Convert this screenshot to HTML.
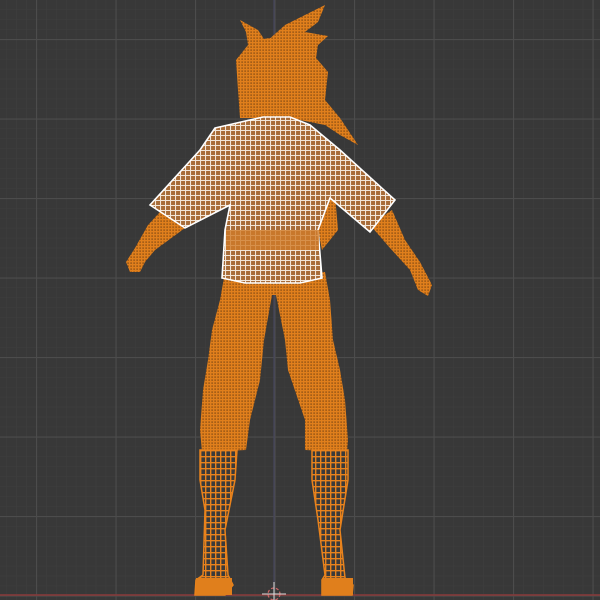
<!DOCTYPE html>
<html><head><style>
html,body{margin:0;padding:0;background:#383838;width:600px;height:600px;overflow:hidden}
</style></head><body>
<svg width="600" height="600" viewBox="0 0 600 600" xmlns="http://www.w3.org/2000/svg">
<defs>
<pattern id="minor" x="-3.7" y="-0.75" width="9.94" height="9.94" patternUnits="userSpaceOnUse">
<path d="M0 0H9.94M0 0V9.94" stroke="#3e3e3e" stroke-width="1"/>
</pattern>
<pattern id="major" x="36" y="39" width="79.5" height="79.5" patternUnits="userSpaceOnUse">
<path d="M0 0.5H79.5M0.5 0V79.5" stroke="#4c4c4c" stroke-width="1.2"/>
</pattern>
<pattern id="dense" width="3" height="3" patternUnits="userSpaceOnUse">
<rect width="3" height="3" fill="#e07f1c"/><rect x="1.5" y="1.5" width="1.2" height="1.2" fill="#6a3c12"/>
</pattern>
<pattern id="sparse" width="5" height="6" patternUnits="userSpaceOnUse">
<rect width="5" height="6" fill="#3a3a3a"/><path d="M0 0.7H5M0.7 0V6" stroke="#e8821c" stroke-width="1.4"/>
</pattern>
<pattern id="shirt" width="5" height="5" patternUnits="userSpaceOnUse">
<rect width="5" height="5" fill="#a86c38"/><path d="M0 0.5H5M0.5 0V5" stroke="#f2e6d8" stroke-width="1.1"/>
</pattern>
</defs>
<rect width="600" height="600" fill="#383838"/>
<rect width="600" height="600" fill="url(#minor)"/>
<rect width="600" height="600" fill="url(#major)"/>
<line x1="274" y1="0" x2="274" y2="600" stroke="#46465e" stroke-width="1.2"/>
<line x1="0" y1="595" x2="600" y2="595" stroke="#8a3a3a" stroke-width="1.5"/>

<!-- hair -->
<g fill="url(#dense)">
<path d="M240 20 L258 30 L266 42 L285 25 L305 15 L325 5 L318 22 L305 32 L328 36 L318 45 L316 58 L328 72 L325 100 L340 118 L358 145 L340 135 L325 125 L290 118 L240 118 L238 90 L236 60 L248 45 L246 32 Z"/>
<circle cx="272" cy="72" r="34"/>
</g>
<!-- arms -->
<path d="M160 212 L185 228 L155 250 L145 262 L140 272 L130 272 L126 262 L135 248 L148 225 Z" fill="url(#dense)"/>
<path d="M370 225 L392 210 L405 240 L420 262 L432 285 L428 296 L418 290 L410 270 L390 248 Z" fill="url(#dense)"/>
<path d="M310 190 L335 195 L338 230 L322 250 Z" fill="url(#dense)"/>
<!-- pants -->
<path d="M225 272 L325 272 L330 300 L333 340 L340 370 L345 400 L348 440 L347 452 L305 450 L305 420 L288 370 L285 340 L276 295 L272 295 L264 340 L260 380 L250 420 L246 450 L202 452 L200 430 L203 390 L208 360 L212 330 L220 300 Z" fill="url(#dense)"/>
<!-- lower legs -->
<path d="M200 450 L237 450 L235 480 L225 530 L228 575 L233 585 L225 595 L195 595 L196 580 L203 575 L205 510 L200 480 Z" fill="url(#sparse)" stroke="#e8821c" stroke-width="1.5"/>
<path d="M312 450 L348 450 L348 480 L340 530 L345 578 L353 585 L352 595 L322 595 L322 580 L325 575 L318 520 L312 480 Z" fill="url(#sparse)" stroke="#e8821c" stroke-width="1.5"/>
<rect x="196" y="578" width="36" height="17" fill="#e07f1c"/>
<rect x="322" y="578" width="31" height="17" fill="#e07f1c"/>
<!-- shirt -->
<path d="M215 128 L263 117 L290 117 L310 125 L340 150 L395 200 L370 232 L330 198 L318 230 L322 278 L300 283 L245 283 L222 278 L225 230 L230 205 L185 228 L150 205 L200 150 Z" fill="url(#shirt)" stroke="#fff" stroke-width="1.6"/>
<rect x="226" y="230" width="93" height="20" fill="#d07a28" opacity="0.8"/>
<circle cx="274" cy="594" r="6" fill="none" stroke="#c66" stroke-width="1.2" stroke-dasharray="3 2"/>
<path d="M262 594H286M274 582V600" stroke="#ddd" stroke-width="1"/>
</svg>
</body></html>
